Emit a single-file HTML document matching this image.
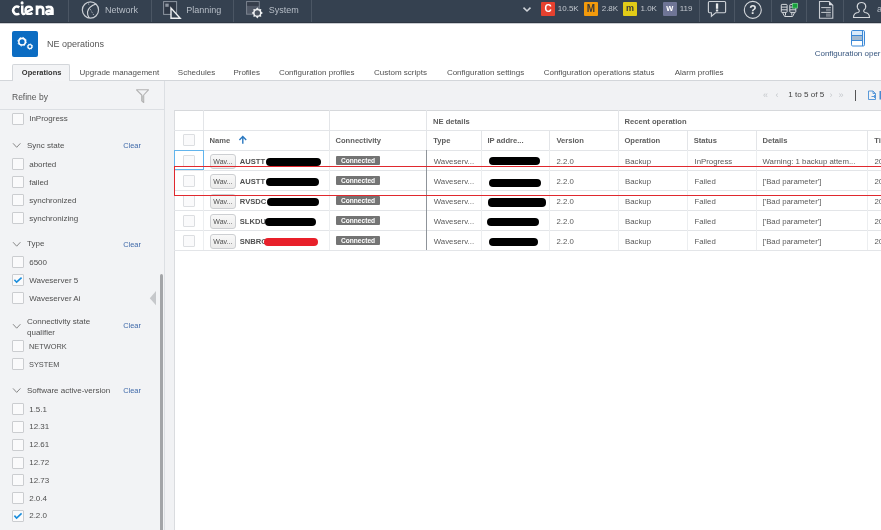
<!DOCTYPE html>
<html><head><meta charset="utf-8">
<style>
*{margin:0;padding:0;box-sizing:border-box}
html,body{width:881px;height:530px;overflow:hidden;background:#fff;font-family:"Liberation Sans",sans-serif}
body{position:relative}
#w{position:absolute;left:0;top:0;width:881px;height:530px;will-change:transform}
.a{position:absolute}
.t{position:absolute;line-height:0;white-space:nowrap}
svg{position:absolute;overflow:visible}
.cb{position:absolute;width:12px;height:12px;border:1px solid #cbcdd0;background:#fafafb;border-radius:1px}
</style></head><body><div id="w">
<div class="a" style="left:0px;top:0px;width:881px;height:22px;background:#354150"></div>
<div class="a" style="left:0px;top:22px;width:881px;height:1px;background:#2d3642"></div>
<div class="a" style="left:0px;top:23px;width:881px;height:1px;background:#c9ccd1"></div>
<svg style="left:0;top:0" width="70" height="22"><g fill="none" stroke="#fff" stroke-width="2.7" stroke-linecap="butt"><path d="M19.2 7.5 A3.6 3.85 0 1 0 19.2 13.3" stroke-width="2.5"/><path d="M22.25 5.6 V12 Q22.25 14.9 25.2 13.7" stroke-width="2.5"/><path d="M26 12.2 L32 9.4 Q31.7 6.8 28.9 6.8 Q25.5 6.8 25.5 10.4 Q25.5 13.9 28.9 13.9 Q30.8 13.9 32.4 12.9" stroke-width="2.4"/><path d="M37 5.6 V15.1 M37 10 Q37 6.9 40.2 6.9 Q43.2 6.9 43.2 9.8 V15.1"/><path d="M45.8 7.6 Q47.5 6.7 49.2 6.8 Q52.4 6.9 52.4 10 V15.1 M52.4 11.3 Q50 10.3 48.3 10.8 Q46.3 11.3 46.4 12.7 Q46.6 14 48.5 14 Q50.7 13.9 52.4 12.3"/></g><circle cx="22.1" cy="2.9" r="1.55" fill="#fff"/></svg>
<div class="a" style="left:68px;top:0px;width:1px;height:22px;background:#4b5664"></div>
<div class="a" style="left:151px;top:0px;width:1px;height:22px;background:#4b5664"></div>
<div class="a" style="left:233px;top:0px;width:1px;height:22px;background:#4b5664"></div>
<div class="a" style="left:311px;top:0px;width:1px;height:22px;background:#4b5664"></div>
<div class="a" style="left:699px;top:0px;width:1px;height:22px;background:#4b5664"></div>
<div class="a" style="left:734px;top:0px;width:1px;height:22px;background:#4b5664"></div>
<div class="a" style="left:771px;top:0px;width:1px;height:22px;background:#4b5664"></div>
<div class="a" style="left:806px;top:0px;width:1px;height:22px;background:#4b5664"></div>
<div class="a" style="left:843px;top:0px;width:1px;height:22px;background:#4b5664"></div>
<svg style="left:0;top:0" width="881" height="23"><circle cx="90.45" cy="10" r="8.1" fill="none" stroke="#c9cdd3" stroke-width="1.2"/><path d="M96.2 4 Q88.6 6.2 87.5 11.8 Q87.2 15.2 89.2 17.9" fill="none" stroke="#d5d8dc" stroke-width="1.1"/><path d="M88 3.6 L89.2 4.6 M90.3 9.2 L91 10.4 M91.6 11.6 L92.3 12.8 M93 13.8 L93.7 15" fill="none" stroke="#b9bec5" stroke-width="0.9"/><rect x="163.6" y="1.6" width="13" height="12.8" fill="#2f3846" stroke="#8e96a1" stroke-width="1"/><rect x="165.3" y="3.6" width="3.4" height="3.2" fill="#8e96a1"/><path d="M171 8 L171 18.2 L180.2 18.2 Z" fill="#354150" stroke="#eef0f2" stroke-width="1.4" stroke-linejoin="miter"/><rect x="246.6" y="1.6" width="12.6" height="12.6" fill="#505866" stroke="#7d8591" stroke-width="1"/><rect x="247.1" y="2.1" width="11.6" height="3.8" fill="#363e4b"/><polygon points="257.30,7.30 258.83,9.20 261.26,8.94 261.00,11.37 262.90,12.90 261.00,14.43 261.26,16.86 258.83,16.60 257.30,18.50 255.77,16.60 253.34,16.86 253.60,14.43 251.70,12.90 253.60,11.37 253.34,8.94 255.77,9.20" fill="#eef0f2"/><circle cx="257.3" cy="12.9" r="2.7" fill="#4c5461"/><path d="M523.5 7.6 L527 11 L530.5 7.6" fill="none" stroke="#d0d4d9" stroke-width="1.5"/><path d="M709.5 1.5 H724.5 Q725.6 1.5 725.6 2.6 V11.6 Q725.6 12.7 724.5 12.7 H715.6 L711.4 16.2 V12.7 H709.5 Q708.4 12.7 708.4 11.6 V2.6 Q708.4 1.5 709.5 1.5 Z" fill="none" stroke="#cdd1d6" stroke-width="1.15"/><rect x="715.9" y="3.4" width="2.3" height="5.4" fill="#e6e8ea"/><rect x="715.9" y="9.5" width="2.3" height="2" fill="#e6e8ea"/><circle cx="752.8" cy="9.9" r="8.5" fill="none" stroke="#d5d8dc" stroke-width="1.1"/><text x="752.8" y="14.4" font-size="12" font-weight="bold" fill="#e6e8ea" text-anchor="middle" font-family="Liberation Sans">?</text><g fill="none" stroke="#d5d8dc" stroke-width="1"><rect x="781.3" y="4.4" width="5.8" height="8" rx="0.8"/><path d="M781.3 7.1 H787.1 M781.3 9.8 H787.1"/><rect x="789.8" y="4.4" width="6" height="8" rx="0.8"/><path d="M789.8 7.1 H795.8 M789.8 9.8 H795.8"/><path d="M782.5 12.5 L784.6 16.5 H792.6 L794.6 12.5 M785.5 12.5 V15.5 M791.8 12.5 V15.5"/></g><rect x="792.4" y="3.3" width="5.2" height="4.8" fill="#17a03c" stroke="#7fd896" stroke-width="0.7"/><path d="M819.5 1.5 H829 L832.8 5.3 V18.3 H819.5 Z" fill="none" stroke="#c9cdd3" stroke-width="1.1"/><path d="M829 1.5 L832.8 5.3 H829 Z" fill="#dde0e6"/><path d="M821.2 7.6 H830.8 M821.2 12.4 H830.8" stroke="#c9cdd3" stroke-width="1"/><rect x="826" y="8.6" width="4.8" height="2.6" fill="#737b86"/><rect x="826" y="13.4" width="4.8" height="3.4" fill="#737b86"/><path d="M853.5 17.5 Q853.5 13 858 12.5 Q860 11.5 859 10 Q856.5 8 857.5 5 Q858.5 2.5 861.5 2.5 Q864.5 2.5 865.5 5 Q866.5 8 864 10 Q863 11.5 865 12.5 Q869.5 13 869.5 17.5 Z" fill="none" stroke="#d5d8dc" stroke-width="1.1"/></svg>
<div class="t" style="left:105px;top:9.58px;font-size:9px;color:#b7bec7;">Network</div>
<div class="t" style="left:186.3px;top:9.58px;font-size:9px;color:#b7bec7;">Planning</div>
<div class="t" style="left:268.7px;top:9.58px;font-size:9px;color:#b7bec7;">System</div>
<div class="t" style="left:877px;top:9.38px;font-size:9px;color:#b7bec7;">a</div>
<div class="a" style="left:541px;top:1.5px;width:14px;height:14px;background:#e5412f;border-radius:1px"></div>
<div class="t" style="left:548px;top:9.13px;font-size:10px;color:#fff;font-weight:bold;transform:translateX(-50%)">C</div>
<div class="t" style="left:557.8px;top:9.23px;font-size:8px;color:#c2c7ce;">10.5K</div>
<div class="a" style="left:584px;top:1.5px;width:14px;height:14px;background:#f39a0b;border-radius:1px"></div>
<div class="t" style="left:591px;top:9.13px;font-size:10px;color:#3a3a3a;font-weight:bold;transform:translateX(-50%)">M</div>
<div class="t" style="left:601.7px;top:9.23px;font-size:8px;color:#c2c7ce;">2.8K</div>
<div class="a" style="left:623px;top:1.5px;width:14px;height:14px;background:#e2cc18;border-radius:1px"></div>
<div class="t" style="left:630px;top:7.68px;font-size:9px;color:#3a3a3a;font-weight:bold;transform:translateX(-50%)">m</div>
<div class="t" style="left:640.5px;top:9.23px;font-size:8px;color:#c2c7ce;">1.0K</div>
<div class="a" style="left:662.7px;top:1.5px;width:14px;height:14px;background:#6f7596;border-radius:1px"></div>
<div class="t" style="left:669.7px;top:7.68px;font-size:9px;color:#fff;font-weight:bold;transform:translateX(-50%)">w</div>
<div class="t" style="left:679.7px;top:9.23px;font-size:8px;color:#c2c7ce;">119</div>
<div class="a" style="left:12px;top:31px;width:26px;height:25.5px;background:#0b6cc2;border-radius:2px"></div>
<svg style="left:0;top:0" width="881" height="80"><circle cx="22.1" cy="41.7" r="3.3" fill="none" stroke="#fff" stroke-width="1.6"/><circle cx="22.1" cy="41.7" r="4.3" fill="none" stroke="#fff" stroke-width="0.9" stroke-dasharray="1.5 1.88"/><circle cx="29.95" cy="46.6" r="2.0" fill="none" stroke="#fff" stroke-width="1.2"/><circle cx="29.95" cy="46.6" r="2.7" fill="none" stroke="#fff" stroke-width="0.8" stroke-dasharray="1.0 1.12"/><rect x="852" y="31" width="10.5" height="4.5" fill="#d9eafa"/><rect x="852" y="35.5" width="10.5" height="5" fill="#a3b9cf"/><rect x="862.5" y="31" width="2" height="14.5" fill="#e3effa"/><g fill="none" stroke="#3b88d6" stroke-width="1"><rect x="851.5" y="30.5" width="13" height="15.5" rx="1.2"/><path d="M851.5 35.5 H862.5 M851.5 40.5 H862.5 M862.5 30.5 V46"/></g></svg>
<div class="t" style="left:47px;top:44.08px;font-size:9px;color:#555;">NE operations</div>
<div class="t" style="left:814.7px;top:54.13px;font-size:8px;color:#36557e;">Configuration oper</div>
<div class="a" style="left:0px;top:80px;width:881px;height:1px;background:#d3d6da"></div>
<div class="a" style="left:12px;top:63.5px;width:58px;height:18px;background:#f3f4f6;border:1px solid #d3d6da;border-bottom:none;border-radius:2px 2px 0 0"></div>
<div class="t" style="left:21.8px;top:72.80px;font-size:7.5px;color:#333;font-weight:bold;">Operations</div>
<div class="t" style="left:79.6px;top:72.93px;font-size:8px;color:#505050;">Upgrade management</div>
<div class="t" style="left:177.8px;top:72.93px;font-size:8px;color:#505050;">Schedules</div>
<div class="t" style="left:233.4px;top:72.93px;font-size:8px;color:#505050;">Profiles</div>
<div class="t" style="left:278.9px;top:72.93px;font-size:8px;color:#505050;">Configuration profiles</div>
<div class="t" style="left:374px;top:72.93px;font-size:8px;color:#505050;">Custom scripts</div>
<div class="t" style="left:446.9px;top:72.93px;font-size:8px;color:#505050;">Configuration settings</div>
<div class="t" style="left:543.7px;top:72.93px;font-size:8px;color:#505050;">Configuration operations status</div>
<div class="t" style="left:674.7px;top:72.93px;font-size:8px;color:#505050;">Alarm profiles</div>
<div class="a" style="left:0px;top:81px;width:164px;height:449px;background:#f2f3f5"></div>
<div class="a" style="left:164px;top:81px;width:1px;height:449px;background:#dcdfe3"></div>
<div class="t" style="left:12px;top:97.05px;font-size:8.5px;color:#555;">Refine by</div>
<svg style="left:0;top:0" width="881" height="530"><path d="M136.5 89.8 H148.5 L143.7 95 V102.5 L141.7 100.8 V95 Z" fill="none" stroke="#b3b3b3" stroke-width="1.1" stroke-linejoin="round"/><path d="M142.2 95.5 H143.2 V101.5 L142.2 100.6 Z" fill="#b8b8b8"/></svg>
<div class="a" style="left:0px;top:109px;width:164px;height:1px;background:#dcdfe3"></div>
<div class="cb" style="left:12px;top:113.3px"></div>
<div class="t" style="left:29.2px;top:119.23px;font-size:8px;color:#4f4f4f;">InProgress</div>
<svg style="left:0;top:0" width="30" height="530"><path d="M13 143.3 L16.7 147.3 L20.4 143.3" fill="none" stroke="#888" stroke-width="1"/></svg>
<div class="t" style="left:27px;top:146.23px;font-size:8px;color:#4f4f4f;">Sync state</div>
<div class="t" style="left:123.2px;top:146.43px;font-size:7.4px;color:#3d68a8;">Clear</div>
<div class="cb" style="left:12px;top:158.2px"></div>
<div class="t" style="left:29.2px;top:164.53px;font-size:8px;color:#4f4f4f;">aborted</div>
<div class="cb" style="left:12px;top:176.2px"></div>
<div class="t" style="left:29.2px;top:182.53px;font-size:8px;color:#4f4f4f;">failed</div>
<div class="cb" style="left:12px;top:194.2px"></div>
<div class="t" style="left:29.2px;top:200.53px;font-size:8px;color:#4f4f4f;">synchronized</div>
<div class="cb" style="left:12px;top:212.2px"></div>
<div class="t" style="left:29.2px;top:218.53px;font-size:8px;color:#4f4f4f;">synchronizing</div>
<svg style="left:0;top:0" width="30" height="530"><path d="M13 242.2 L16.7 246.2 L20.4 242.2" fill="none" stroke="#888" stroke-width="1"/></svg>
<div class="t" style="left:27px;top:244.43px;font-size:8px;color:#4f4f4f;">Type</div>
<div class="t" style="left:123.2px;top:244.63px;font-size:7.4px;color:#3d68a8;">Clear</div>
<div class="cb" style="left:12px;top:256.2px"></div>
<div class="t" style="left:29.2px;top:262.53px;font-size:8px;color:#4f4f4f;">6500</div>
<div class="cb" style="left:12px;top:274.2px"></div>
<svg style="left:0;top:0" width="30" height="530"><path d="M14.4 279.8 L16.6 282.2 L21.6 277.59999999999997" fill="none" stroke="#1a8ddc" stroke-width="1.6"/></svg>
<div class="t" style="left:29.2px;top:280.53px;font-size:8px;color:#4f4f4f;">Waveserver 5</div>
<div class="cb" style="left:12px;top:292.2px"></div>
<div class="t" style="left:29.2px;top:298.53px;font-size:8px;color:#4f4f4f;">Waveserver Ai</div>
<svg style="left:0;top:0" width="30" height="530"><path d="M13 324.2 L16.7 328.2 L20.4 324.2" fill="none" stroke="#888" stroke-width="1"/></svg>
<div class="t" style="left:27px;top:321.63px;font-size:8px;color:#4f4f4f;">Connectivity state</div>
<div class="t" style="left:27px;top:332.53px;font-size:8px;color:#4f4f4f;">qualifier</div>
<div class="t" style="left:123.2px;top:325.83px;font-size:7.4px;color:#3d68a8;">Clear</div>
<div class="cb" style="left:12px;top:340.3px"></div>
<div class="t" style="left:29.0px;top:346.63px;font-size:7.4px;color:#4f4f4f;">NETWORK</div>
<div class="cb" style="left:12px;top:358.3px"></div>
<div class="t" style="left:29.0px;top:364.63px;font-size:7.4px;color:#4f4f4f;">SYSTEM</div>
<svg style="left:0;top:0" width="30" height="530"><path d="M13 388.4 L16.7 392.4 L20.4 388.4" fill="none" stroke="#888" stroke-width="1"/></svg>
<div class="t" style="left:27px;top:391.03px;font-size:8px;color:#4f4f4f;">Software active-version</div>
<div class="t" style="left:123.2px;top:390.83px;font-size:7.4px;color:#3d68a8;">Clear</div>
<div class="cb" style="left:12px;top:403.2px"></div>
<div class="t" style="left:29.2px;top:409.53px;font-size:8px;color:#4f4f4f;">1.5.1</div>
<div class="cb" style="left:12px;top:421.0px"></div>
<div class="t" style="left:29.2px;top:427.33px;font-size:8px;color:#4f4f4f;">12.31</div>
<div class="cb" style="left:12px;top:438.8px"></div>
<div class="t" style="left:29.2px;top:445.13px;font-size:8px;color:#4f4f4f;">12.61</div>
<div class="cb" style="left:12px;top:456.6px"></div>
<div class="t" style="left:29.2px;top:462.93px;font-size:8px;color:#4f4f4f;">12.72</div>
<div class="cb" style="left:12px;top:474.4px"></div>
<div class="t" style="left:29.2px;top:480.73px;font-size:8px;color:#4f4f4f;">12.73</div>
<div class="cb" style="left:12px;top:492.2px"></div>
<div class="t" style="left:29.2px;top:498.53px;font-size:8px;color:#4f4f4f;">2.0.4</div>
<div class="cb" style="left:12px;top:510.0px"></div>
<svg style="left:0;top:0" width="30" height="530"><path d="M14.4 515.6 L16.6 518.0 L21.6 513.4" fill="none" stroke="#1a8ddc" stroke-width="1.6"/></svg>
<div class="t" style="left:29.2px;top:516.33px;font-size:8px;color:#4f4f4f;">2.2.0</div>
<div class="a" style="left:160px;top:274px;width:3px;height:256px;background:#a3a5a8;border-radius:1.5px 1.5px 0 0"></div>
<svg style="left:0;top:0" width="881" height="530"><path d="M156 291 L149.8 298.2 L156 305.3 Z" fill="#c6c8cb"/></svg>
<div class="a" style="left:165px;top:81px;width:716px;height:449px;background:#f1f2f4"></div>
<div class="a" style="left:174px;top:110px;width:707px;height:420px;background:#fff;border-left:1px solid #dadcdf;border-top:1px solid #d6d8db"></div>
<div class="t" style="left:763px;top:94.58px;font-size:9px;color:#c5c8cc;">&laquo;</div>
<div class="t" style="left:775.5px;top:94.58px;font-size:9px;color:#c5c8cc;">&lsaquo;</div>
<div class="t" style="left:788.2px;top:95.39px;font-size:8.1px;color:#444;">1 to 5 of 5</div>
<div class="t" style="left:829.5px;top:94.58px;font-size:9px;color:#c5c8cc;">&rsaquo;</div>
<div class="t" style="left:838.5px;top:94.58px;font-size:9px;color:#c5c8cc;">&raquo;</div>
<div class="a" style="left:855px;top:90px;width:1px;height:10.5px;background:#555"></div>
<svg style="left:0;top:0" width="881" height="530"><g fill="none" stroke="#4a90d6" stroke-width="0.9"><path d="M868.5 91 H873 L875.5 93.5 V99.5 H868.5 Z"/><path d="M873 91 V93.5 H875.5 M871.5 96.5 H875.5 L874 95 M875.5 96.5 L874 98"/></g><rect x="879.5" y="91" width="1.5" height="8.5" fill="#4a8ad0"/></svg>
<div class="a" style="left:174px;top:130px;width:707px;height:1px;background:#e3e5e8"></div>
<div class="a" style="left:174px;top:150px;width:707px;height:1px;background:#e3e5e8"></div>
<div class="a" style="left:174px;top:170px;width:707px;height:1px;background:#e3e5e8"></div>
<div class="a" style="left:174px;top:190px;width:707px;height:1px;background:#e3e5e8"></div>
<div class="a" style="left:174px;top:210px;width:707px;height:1px;background:#e3e5e8"></div>
<div class="a" style="left:174px;top:230px;width:707px;height:1px;background:#e3e5e8"></div>
<div class="a" style="left:174px;top:250px;width:707px;height:1px;background:#e3e5e8"></div>
<div class="a" style="left:203px;top:110px;width:1px;height:20px;background:#e3e5e8"></div>
<div class="a" style="left:329px;top:110px;width:1px;height:20px;background:#e3e5e8"></div>
<div class="a" style="left:426px;top:110px;width:1px;height:20px;background:#e3e5e8"></div>
<div class="a" style="left:618px;top:110px;width:1px;height:20px;background:#e3e5e8"></div>
<div class="a" style="left:203px;top:130px;width:1px;height:20px;background:#e3e5e8"></div>
<div class="a" style="left:329px;top:130px;width:1px;height:20px;background:#e3e5e8"></div>
<div class="a" style="left:426px;top:130px;width:1px;height:20px;background:#e3e5e8"></div>
<div class="a" style="left:481px;top:130px;width:1px;height:20px;background:#e3e5e8"></div>
<div class="a" style="left:549px;top:130px;width:1px;height:20px;background:#e3e5e8"></div>
<div class="a" style="left:618px;top:130px;width:1px;height:20px;background:#e3e5e8"></div>
<div class="a" style="left:687px;top:130px;width:1px;height:20px;background:#e3e5e8"></div>
<div class="a" style="left:756px;top:130px;width:1px;height:20px;background:#e3e5e8"></div>
<div class="a" style="left:867px;top:130px;width:1px;height:20px;background:#e3e5e8"></div>
<div class="a" style="left:203px;top:150px;width:1px;height:100px;background:#eceef0"></div>
<div class="a" style="left:329px;top:150px;width:1px;height:100px;background:#eceef0"></div>
<div class="a" style="left:426px;top:150px;width:1px;height:100px;background:#8f949a"></div>
<div class="a" style="left:481px;top:150px;width:1px;height:100px;background:#eceef0"></div>
<div class="a" style="left:549px;top:150px;width:1px;height:100px;background:#eceef0"></div>
<div class="a" style="left:618px;top:150px;width:1px;height:100px;background:#eceef0"></div>
<div class="a" style="left:687px;top:150px;width:1px;height:100px;background:#eceef0"></div>
<div class="a" style="left:756px;top:150px;width:1px;height:100px;background:#eceef0"></div>
<div class="a" style="left:867px;top:150px;width:1px;height:100px;background:#eceef0"></div>
<div class="t" style="left:433px;top:121.57px;font-size:7.6px;color:#5e5e5e;font-weight:bold;">NE details</div>
<div class="t" style="left:624.5px;top:121.57px;font-size:7.6px;color:#5e5e5e;font-weight:bold;">Recent operation</div>
<div class="cb" style="left:183px;border-color:#dcdee1;top:134.4px"></div>
<div class="t" style="left:209.5px;top:141.47px;font-size:7.6px;color:#5e5e5e;font-weight:bold;">Name</div>
<div class="t" style="left:335.5px;top:141.47px;font-size:7.6px;color:#5e5e5e;font-weight:bold;">Connectivity</div>
<div class="t" style="left:433.3px;top:141.47px;font-size:7.6px;color:#5e5e5e;font-weight:bold;">Type</div>
<div class="t" style="left:487.4px;top:141.47px;font-size:7.6px;color:#5e5e5e;font-weight:bold;">IP addre...</div>
<div class="t" style="left:556.4px;top:141.47px;font-size:7.6px;color:#5e5e5e;font-weight:bold;">Version</div>
<div class="t" style="left:624.4px;top:141.47px;font-size:7.6px;color:#5e5e5e;font-weight:bold;">Operation</div>
<div class="t" style="left:693.7px;top:141.47px;font-size:7.6px;color:#5e5e5e;font-weight:bold;">Status</div>
<div class="t" style="left:762.5px;top:141.47px;font-size:7.6px;color:#5e5e5e;font-weight:bold;">Details</div>
<div class="t" style="left:874.2px;top:141.47px;font-size:7.6px;color:#5e5e5e;font-weight:bold;">Ti</div>
<svg style="left:0;top:0" width="881" height="530"><path d="M242.8 143.8 V137 M239.4 140 L242.8 136.6 L246.2 140" fill="none" stroke="#2a78c0" stroke-width="1.4"/></svg>
<div class="cb" style="left:183px;border-color:#dcdee1;top:154.5px"></div>
<div class="a" style="left:210px;top:154px;width:26px;height:14.5px;background:linear-gradient(#f8f8f8,#ebebeb);border:1px solid #cdcfd2;border-radius:3px"></div>
<div class="t" style="left:213.3px;top:162.17px;font-size:7px;color:#505050;">Wav...</div>
<div class="t" style="left:239.8px;top:161.77px;font-size:7.6px;color:#505050;font-weight:bold;">AUSTT</div>
<div class="a" style="left:265.7px;top:158px;width:55.3px;height:8px;background:#000;border-radius:4px"></div>
<div class="a" style="left:336px;top:156.2px;width:44.2px;height:8.6px;background:#747474;border-radius:1px"></div>
<div class="t" style="left:341px;top:160.91px;font-size:6.6px;color:#fff;font-weight:bold;">Connected</div>
<div class="t" style="left:433.8px;top:161.70px;font-size:7.8px;color:#5a5a5a;">Waveserv...</div>
<div class="a" style="left:489.3px;top:156.5px;width:51.0px;height:8.8px;background:#000;border-radius:4px"></div>
<div class="t" style="left:556.5px;top:161.70px;font-size:7.8px;color:#5a5a5a;">2.2.0</div>
<div class="t" style="left:625px;top:161.70px;font-size:7.8px;color:#5a5a5a;">Backup</div>
<div class="t" style="left:694.5px;top:161.70px;font-size:7.8px;color:#5a5a5a;">InProgress</div>
<div class="t" style="left:762.5px;top:161.70px;font-size:7.8px;color:#5a5a5a;">Warning: 1 backup attem...</div>
<div class="t" style="left:874.5px;top:161.70px;font-size:7.8px;color:#5a5a5a;">20</div>
<div class="cb" style="left:183px;border-color:#dcdee1;top:174.5px"></div>
<div class="a" style="left:210px;top:174px;width:26px;height:14.5px;background:linear-gradient(#f8f8f8,#ebebeb);border:1px solid #cdcfd2;border-radius:3px"></div>
<div class="t" style="left:213.3px;top:182.17px;font-size:7px;color:#505050;">Wav...</div>
<div class="t" style="left:239.8px;top:181.77px;font-size:7.6px;color:#505050;font-weight:bold;">AUSTT</div>
<div class="a" style="left:265.7px;top:178.2px;width:53.5px;height:7.4px;background:#000;border-radius:4px"></div>
<div class="a" style="left:336px;top:176.2px;width:44.2px;height:8.6px;background:#747474;border-radius:1px"></div>
<div class="t" style="left:341px;top:180.91px;font-size:6.6px;color:#fff;font-weight:bold;">Connected</div>
<div class="t" style="left:433.8px;top:181.70px;font-size:7.8px;color:#5a5a5a;">Waveserv...</div>
<div class="a" style="left:488.8px;top:178.6px;width:52.3px;height:8.5px;background:#000;border-radius:4px"></div>
<div class="t" style="left:556.5px;top:181.70px;font-size:7.8px;color:#5a5a5a;">2.2.0</div>
<div class="t" style="left:625px;top:181.70px;font-size:7.8px;color:#5a5a5a;">Backup</div>
<div class="t" style="left:694.5px;top:181.70px;font-size:7.8px;color:#5a5a5a;">Failed</div>
<div class="t" style="left:762.5px;top:181.70px;font-size:7.8px;color:#5a5a5a;">['Bad parameter']</div>
<div class="t" style="left:874.5px;top:181.70px;font-size:7.8px;color:#5a5a5a;">20</div>
<div class="cb" style="left:183px;border-color:#dcdee1;top:194.5px"></div>
<div class="a" style="left:210px;top:194px;width:26px;height:14.5px;background:linear-gradient(#f8f8f8,#ebebeb);border:1px solid #cdcfd2;border-radius:3px"></div>
<div class="t" style="left:213.3px;top:202.17px;font-size:7px;color:#505050;">Wav...</div>
<div class="t" style="left:239.8px;top:201.77px;font-size:7.6px;color:#505050;font-weight:bold;">RVSDC</div>
<div class="a" style="left:266.9px;top:198px;width:52.2px;height:7.7px;background:#000;border-radius:4px"></div>
<div class="a" style="left:336px;top:196.2px;width:44.2px;height:8.6px;background:#747474;border-radius:1px"></div>
<div class="t" style="left:341px;top:200.91px;font-size:6.6px;color:#fff;font-weight:bold;">Connected</div>
<div class="t" style="left:433.8px;top:201.70px;font-size:7.8px;color:#5a5a5a;">Waveserv...</div>
<div class="a" style="left:488px;top:198.4px;width:58px;height:9.1px;background:#000;border-radius:4px"></div>
<div class="t" style="left:556.5px;top:201.70px;font-size:7.8px;color:#5a5a5a;">2.2.0</div>
<div class="t" style="left:625px;top:201.70px;font-size:7.8px;color:#5a5a5a;">Backup</div>
<div class="t" style="left:694.5px;top:201.70px;font-size:7.8px;color:#5a5a5a;">Failed</div>
<div class="t" style="left:762.5px;top:201.70px;font-size:7.8px;color:#5a5a5a;">['Bad parameter']</div>
<div class="t" style="left:874.5px;top:201.70px;font-size:7.8px;color:#5a5a5a;">20</div>
<div class="cb" style="left:183px;border-color:#dcdee1;top:214.5px"></div>
<div class="a" style="left:210px;top:214px;width:26px;height:14.5px;background:linear-gradient(#f8f8f8,#ebebeb);border:1px solid #cdcfd2;border-radius:3px"></div>
<div class="t" style="left:213.3px;top:222.17px;font-size:7px;color:#505050;">Wav...</div>
<div class="t" style="left:239.8px;top:221.77px;font-size:7.6px;color:#505050;font-weight:bold;">SLKDU</div>
<div class="a" style="left:265px;top:217.8px;width:51px;height:8.3px;background:#000;border-radius:4px"></div>
<div class="a" style="left:336px;top:216.2px;width:44.2px;height:8.6px;background:#747474;border-radius:1px"></div>
<div class="t" style="left:341px;top:220.91px;font-size:6.6px;color:#fff;font-weight:bold;">Connected</div>
<div class="t" style="left:433.8px;top:221.70px;font-size:7.8px;color:#5a5a5a;">Waveserv...</div>
<div class="a" style="left:487px;top:218.2px;width:51.9px;height:7.9px;background:#000;border-radius:4px"></div>
<div class="t" style="left:556.5px;top:221.70px;font-size:7.8px;color:#5a5a5a;">2.2.0</div>
<div class="t" style="left:625px;top:221.70px;font-size:7.8px;color:#5a5a5a;">Backup</div>
<div class="t" style="left:694.5px;top:221.70px;font-size:7.8px;color:#5a5a5a;">Failed</div>
<div class="t" style="left:762.5px;top:221.70px;font-size:7.8px;color:#5a5a5a;">['Bad parameter']</div>
<div class="t" style="left:874.5px;top:221.70px;font-size:7.8px;color:#5a5a5a;">20</div>
<div class="cb" style="left:183px;border-color:#dcdee1;top:234.5px"></div>
<div class="a" style="left:210px;top:234px;width:26px;height:14.5px;background:linear-gradient(#f8f8f8,#ebebeb);border:1px solid #cdcfd2;border-radius:3px"></div>
<div class="t" style="left:213.3px;top:242.17px;font-size:7px;color:#505050;">Wav...</div>
<div class="t" style="left:239.8px;top:241.77px;font-size:7.6px;color:#505050;font-weight:bold;">SNBRG</div>
<div class="a" style="left:264px;top:238.2px;width:54px;height:8.0px;background:#e8202a;border-radius:4px"></div>
<div class="a" style="left:336px;top:236.2px;width:44.2px;height:8.6px;background:#747474;border-radius:1px"></div>
<div class="t" style="left:341px;top:240.91px;font-size:6.6px;color:#fff;font-weight:bold;">Connected</div>
<div class="t" style="left:433.8px;top:241.70px;font-size:7.8px;color:#5a5a5a;">Waveserv...</div>
<div class="a" style="left:488.8px;top:237.5px;width:49.5px;height:8.2px;background:#000;border-radius:4px"></div>
<div class="t" style="left:556.5px;top:241.70px;font-size:7.8px;color:#5a5a5a;">2.2.0</div>
<div class="t" style="left:625px;top:241.70px;font-size:7.8px;color:#5a5a5a;">Backup</div>
<div class="t" style="left:694.5px;top:241.70px;font-size:7.8px;color:#5a5a5a;">Failed</div>
<div class="t" style="left:762.5px;top:241.70px;font-size:7.8px;color:#5a5a5a;">['Bad parameter']</div>
<div class="t" style="left:874.5px;top:241.70px;font-size:7.8px;color:#5a5a5a;">20</div>
<div class="a" style="left:174px;top:150px;width:30px;height:20px;border:1.2px solid #62b4ec"></div>
<div class="a" style="left:174px;top:166.2px;width:720px;height:29.8px;border:1.3px solid #e0282e"></div>
</div></body></html>
